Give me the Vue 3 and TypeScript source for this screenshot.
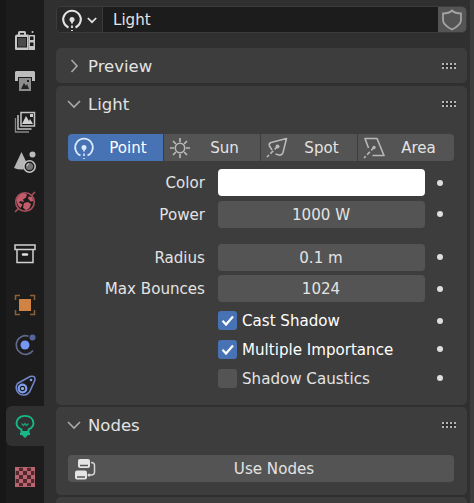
<script setup lang="ts">
import { ref } from 'vue'

interface Field { label: string; value: string; color?: boolean; spaced?: boolean }
interface Check { label: string; on: boolean }

const lightTypes: string[] = ['Point', 'Sun', 'Spot', 'Area']
const activeType = ref<string>('Point')
const fields: Field[] = [
  { label: 'Color', value: '', color: true },
  { label: 'Power', value: '1000 W' },
  { label: 'Radius', value: '0.1 m', spaced: true },
  { label: 'Max Bounces', value: '1024' },
]
const checks = ref<Check[]>([
  { label: 'Cast Shadow', on: true },
  { label: 'Multiple Importance', on: true },
  { label: 'Shadow Caustics', on: false },
])
const checker: number[] = Array.from({ length: 25 }, (_, i) => i).filter((i) => i % 2 === 0)
</script>

<template>
  <div class="editor">
    <nav class="rail">
      <div class="tab">
        <svg viewBox="0 0 22 22"><path fill="#c6c6c6" fill-rule="evenodd" d="M4 4.500V2.500Q4 1 5.500 1h5Q12 1 12 2.500v2h2.500V20H2Q1 20 1 19V6.500q0-2 2-2zM6 3v1.500h4V3zM3 7v10.500h10V7z"/><path fill="#4a4a4a" d="M4 8h8v8.500H4z"/><path fill="#c6c6c6" fill-rule="evenodd" d="M14.500 5H21v15h-6.500zM16 6.500V10h3.500V6.500zM16 12.500V16h3.500v-3.500z"/><circle cx="18.500" cy="2" r="1" fill="#c6c6c6"/></svg>
      </div>
      <div class="tab">
        <svg viewBox="0 0 22 22"><path fill="#bcbcbc" d="M2 1h18l1 1v9h-3V7H4v4H1V2z"/><path fill="#8c8c8c" d="M5 8h12v13H5z"/><path fill="#222" d="m7 19 3-6 2 3 1-2 2 5zM13 10h2v2h-2z"/></svg>
      </div>
      <div class="tab">
        <svg viewBox="0 0 22 22"><path fill="none" stroke="#c4c4c4" stroke-width="1.500" d="M7 1.500h13.500V15H7zM4 4v14h13.500"/><path fill="none" stroke="#888" stroke-width="1.300" d="M1.500 7v14H15"/><path fill="#d0d0d0" d="m8 13 4-8 3 5 1-2 3 5zM16 3h3v3h-3z"/></svg>
      </div>
      <div class="tab">
        <svg viewBox="0 0 22 22"><path fill="#b5b5b5" d="m7.500 1 5 10.500q-3 3-3 7-5 .5-9.500-1.500z"/><circle cx="18.500" cy="3.500" r="3" fill="#bbb"/><circle cx="15.500" cy="15.500" r="5.700" fill="#1c1c1c" stroke="#c4c4c4" stroke-width="1.600"/><circle cx="15.500" cy="15.500" r="3.600" fill="#757575"/><path fill="none" stroke="#ddd" d="M13 15q0-2 2-2.500"/></svg>
      </div>
      <div class="tab">
        <svg viewBox="0 0 22 22"><circle cx="11" cy="11" r="9.300" fill="none" stroke="#a64f5c" stroke-width="1.600"/><path stroke="#a64f5c" stroke-width="1.600" d="m1 21 3.500-3.500M17.500 4.500 21 1"/><path fill="#c35b69" d="M3 8q2-5 7-6l3 1.500-1 3-3 2 1 2.500-4-1-1 1.500 3.500 2-2 3.500Q3 14 2.500 9zM10 12l4-1 3 2-1.500 4-3.500 2.500-3-3zM14.500 5.500l3.500.5 1.500 4-3 .5-2.500-3z"/></svg>
      </div>
      <div class="tab lone">
        <svg viewBox="0 0 22 22"><path fill="none" stroke="#d1d1d1" stroke-width="1.500" d="M1 2h20v4.500H1zM3 7v12.500h16V7"/><path stroke="#e0e0e0" stroke-width="2.400" stroke-linecap="round" d="M9 11.500h4"/></svg>
      </div>
      <div class="tab">
        <svg viewBox="0 0 22 22"><path fill="#d08343" d="M5 5h12v12H5z"/><path fill="none" stroke="#8e6037" stroke-width="1.500" d="M1.500 6V1.500H6M16 1.500h4.500V6M20.500 16v4.500H16M6 20.500H1.500V16"/></svg>
      </div>
      <div class="tab">
        <svg viewBox="0 0 22 22"><path fill="none" stroke="#60688c" stroke-width="1.700" d="M14.500 2.200A9.300 9.300 0 1 0 19 16.500"/><circle cx="18.500" cy="3.500" r="3" fill="#56659b"/><circle cx="11" cy="11" r="4.500" fill="#7698f2"/></svg>
      </div>
      <div class="tab">
        <svg viewBox="0 0 22 22"><path fill="none" stroke="#7188cd" stroke-width="1.500" d="M3.500 8.500 16 1.500q5.500-1.500 5 3.500L15.500 17A7.300 7.300 0 1 1 3.500 8.500z"/><circle cx="8.500" cy="13.500" r="3.800" fill="none" stroke="#809deb" stroke-width="2.200"/><circle cx="8.500" cy="13.500" r="1.600" fill="#9bb4f6"/><circle cx="17" cy="5" r="1.300" fill="#809deb"/></svg>
      </div>
      <div class="tab active">
        <svg viewBox="0 0 22 22"><path fill="none" stroke="#18b887" stroke-width="1.900" d="M7.500 17v-2.500Q2.500 12 2.500 8.500C2.500 3.800 6 .9 11 .9s8.500 2.900 8.500 7.600q0 3.500-5 6V17z"/><path fill="none" stroke="#18a078" stroke-width="1.300" d="M7.500 8.500l2 2 1.500-2 1.500 2 2-2"/><path fill="#18b887" d="M6 18h10v2h-2l-3 3-3-3H6z"/></svg>
      </div>
      <div class="tab texture">
        <svg viewBox="0 0 22 22"><path fill="#54262e" stroke="#9b5963" d="M1.500 1.500h19v19h-19z"/><rect v-for="i in checker" :key="i" :x="1 + (i % 5) * 4" :y="1 + Math.floor(i / 5) * 4" width="4" height="4" fill="#b7656f"/></svg>
      </div>
    </nav>

    <main class="content">
      <div class="datablock">
        <button class="kind">
          <svg class="ico" viewBox="0 0 22 22"><path class="line" stroke-width="2" d="M7.500 18.500A8.800 8.800 0 1 1 14.500 18.500"/><circle cx="11" cy="10.500" r="2.500" fill="#e1e1e1"/><path class="line" stroke-dasharray="2.500 2" stroke-width="1.800" d="M11 12v10"/></svg>
          <svg class="mini" viewBox="0 0 10 7"><path class="line" stroke-width="1.700" d="m.8 1 4.200 4.200L9.200 1"/></svg>
        </button>
        <div class="name">Light</div>
        <button class="shield"><svg class="ico" viewBox="0 0 22 22"><path fill="none" stroke="#a3a3a3" stroke-width="1.800" d="M11 1.500Q14 4.500 20 4.500V11q0 5-9 9.500Q2 16 2 11V4.500q6 0 9-3z"/></svg></button>
      </div>

      <section class="panel">
        <header><svg class="arrow" viewBox="0 0 16 16"><path d="m5.500 2 5.500 6-5.500 6"/></svg><span>Preview</span><i class="grip"></i></header>
      </section>

      <section class="panel">
        <header><svg class="arrow" viewBox="0 0 16 16"><path d="m2 5 6 6 6-6"/></svg><span>Light</span><i class="grip"></i></header>
        <div class="segments">
          <button v-for="type in lightTypes" :key="type" :class="{ chosen: type === activeType }" @click="activeType = type">
            <svg class="ico" viewBox="0 0 22 22">
              <g v-if="type === 'Point'"><path class="line" stroke-width="1.800" d="M7.500 18.500A8.800 8.800 0 1 1 14.500 18.500"/><circle cx="11" cy="10.500" r="2.500" fill="#d9eaff"/><path class="line" stroke-dasharray="2.500 2" stroke-width="1.600" d="M11 12v10"/></g>
              <g v-else-if="type === 'Sun'"><circle class="line" cx="11" cy="11" r="4.700" stroke-width="1.600"/><path class="line" stroke-width="1.700" d="M11 1v4M11 17v4M1 11h4M17 11h4M4 4l2.800 2.800M15.200 15.200 18 18M4 18l2.800-2.800M15.200 6.800 18 4"/></g>
              <g v-else-if="type === 'Spot'"><path class="line" stroke-width="1.600" stroke-linejoin="round" d="M6 13 3.500 9Q2.500 6.500 5 5.500L20.500 1.500 17 15.500q-1 3-4 2.500l-3.500-1"/><circle cx="11.500" cy="9.500" r="2" fill="#b9b9b9"/><path class="line" stroke-dasharray="4 2" stroke-width="1.700" d="M11.500 9.500 1 20"/></g>
              <g v-else><path class="line" stroke-width="1.600" stroke-linejoin="round" d="M5.500 11 2 1.500h12L21 18.500H9.500"/><circle cx="11" cy="10.500" r="1.700" fill="#b9b9b9"/><path class="line" stroke-dasharray="4 2" stroke-width="1.600" d="M11 10.500 1 21"/></g>
            </svg>
            <span>{{ type }}</span>
          </button>
        </div>
        <div class="props">
          <div v-for="f in fields" :key="f.label" class="row" :class="{ spaced: f.spaced }">
            <label>{{ f.label }}</label><div class="field" :class="{ swatch: f.color }">{{ f.value }}</div><i class="dot"></i>
          </div>
        </div>
        <div class="checks">
          <div v-for="c in checks" :key="c.label" class="check" :class="{ on: c.on }" @click="c.on = !c.on">
            <span class="box"><svg v-if="c.on" viewBox="0 0 19 19"><path d="m4.500 9.800 3.500 3.700 7-8"/></svg></span>
            <span>{{ c.label }}</span><i class="dot"></i>
          </div>
        </div>
      </section>

      <section class="panel nodes">
        <header><svg class="arrow" viewBox="0 0 16 16"><path d="m2 5 6 6 6-6"/></svg><span>Nodes</span><i class="grip"></i></header>
        <button class="use">
          <svg class="ico" viewBox="0 0 22 22"><rect x="4" y="1" width="12" height="9" rx="2" fill="#e4e4e4"/><rect x="1" y="12.500" width="12" height="9" rx="2" fill="#e4e4e4"/><path stroke="#555" stroke-width="1.300" d="M6 7.500h8M3 19h8"/><path fill="none" stroke="#d5d5d5" stroke-width="1.500" d="M17 4.500q3.500 0 3.500 3V14q0 3-3.500 3h-2"/><circle cx="15" cy="17" r="1.500" fill="#d5d5d5"/></svg>
          <span>Use Nodes</span>
        </button>
      </section>
      <section class="panel next"></section>
    </main>
    <div class="edge"></div>
  </div>
</template>

<style>
body { margin: 0; background: #303030; overflow: hidden; }
</style>

<style scoped>
.editor { display: flex; height: 503px; box-sizing: border-box; overflow: hidden; background: #303030; color: #e3e3e3; font: 15.1px/20px "DejaVu Sans", sans-serif; }
.editor * { box-sizing: border-box; }
button { font: inherit; color: inherit; border: 0; padding: 0; margin: 0; }
.rail { flex: 0 0 44px; background: linear-gradient(90deg, #171717 6px, #1c1c1c 6px); padding: 21px 0 0 6px; display: flex; flex-direction: column; }
.tab { flex: 0 0 40.300px; display: flex; align-items: center; padding-left: 8px; border-radius: 6px 0 0 6px; }
.tab svg { width: 22px; height: 22px; overflow: visible; }
.tab.lone { margin: 11px 0; }
.tab.active { background: #303030; }
.tab.texture { margin-top: 10.500px; }
.content { flex: 1; min-width: 0; padding: 6px 3px 0 12px; display: flex; flex-direction: column; }
.datablock { display: flex; flex: 0 0 27px; margin-bottom: 15px; border-radius: 5px; overflow: hidden; border: 1px solid #3c3c3c; }
.kind { width: 45px; background: #282828; display: flex; align-items: center; padding-left: 4px; gap: 4px; }
.ico { width: 22px; height: 22px; flex: none; overflow: visible; }
.mini { width: 10px; height: 7px; margin-top: 2px; }
.line { fill: none; stroke: currentColor; }
.name { flex: 1; background: #1c1c1c; padding: 3px 0 0 10px; border-left: 1px solid #3a3a3a; }
.shield { width: 28px; background: #545454; display: flex; align-items: center; justify-content: center; }
.panel { background: #3d3d3d; border-radius: 5px; margin-bottom: 3px; padding: 0 12px; flex: 0 0 auto; }
.panel:nth-of-type(1) { height: 35px; }
.panel:nth-of-type(2) { height: 319px; margin-bottom: 2px; }
.panel header { display: flex; align-items: center; height: 35px; font-size: 16.500px; margin-left: -2px; }
.panel header span { padding-top: 2px; }
.arrow { width: 16px; height: 16px; margin-right: 6px; }
.arrow path { fill: none; stroke: #aaa; stroke-width: 1.600; }
.grip { width: 14px; height: 6px; margin: 0 -1px 0 auto; background: linear-gradient(#303030 50%, transparent 50%) 0 2px / 100% 4px, repeating-linear-gradient(90deg, #b5b5b5 0 2px, #303030 2px 4px); }
.segments { display: grid; grid-template-columns: 95px 96px 96px 96px; gap: 1px; height: 27px; margin: 13px 0 8px; width: 386px; border-radius: 4px; overflow: hidden; }
.segments button { background: #545454; display: flex; align-items: center; padding-left: 5px; color: #b8b8b8; }
.segments button span { flex: 1; text-align: center; padding-right: 2px; color: #e3e3e3; }
.segments .chosen { background: #4772b3; color: #d9eaff; }
.segments .chosen span { color: #fff; }
.props { display: flex; flex-direction: column; gap: 4.500px; }
.row { display: flex; align-items: center; height: 27px; }
.row.spaced { margin-top: 11.500px; }
.row label { width: 137px; text-align: right; margin-right: 13px; padding-top: 1px; }
.field { width: 207px; height: 27px; background: #545454; border-radius: 4px; text-align: center; padding: 4px 1px 0 0; }
.swatch { background: #fff; }
.dot { width: 6px; height: 6px; border-radius: 50%; background: #dedede; margin-left: 12px; }
.checks { display: flex; flex-direction: column; gap: 9.800px; margin: 9px 0 0 150px; }
.check { display: flex; align-items: center; height: 19px; }
.check .box { width: 19px; height: 19px; border-radius: 3px; background: #545454; margin-right: 5px; }
.check.on { color: #fff; }
.check.on .box { background: #4772b3; }
.check > span:nth-child(2) { padding-top: 1px; }
.box svg { display: block; width: 19px; height: 19px; fill: none; stroke: #fff; stroke-width: 2.200; }
.check .dot { margin-left: auto; margin-right: 12px; }
.nodes { height: 88px; margin-bottom: 2px; }
.use { display: flex; align-items: center; width: 386px; height: 27px; margin-top: 13px; background: #545454; border-radius: 4px; padding-left: 6px; }
.use span { flex: 1; text-align: center; padding-right: 2px; }
.next { height: 30px; }
.edge { flex: 0 0 4px; background: #3d3d3d; }
</style>
